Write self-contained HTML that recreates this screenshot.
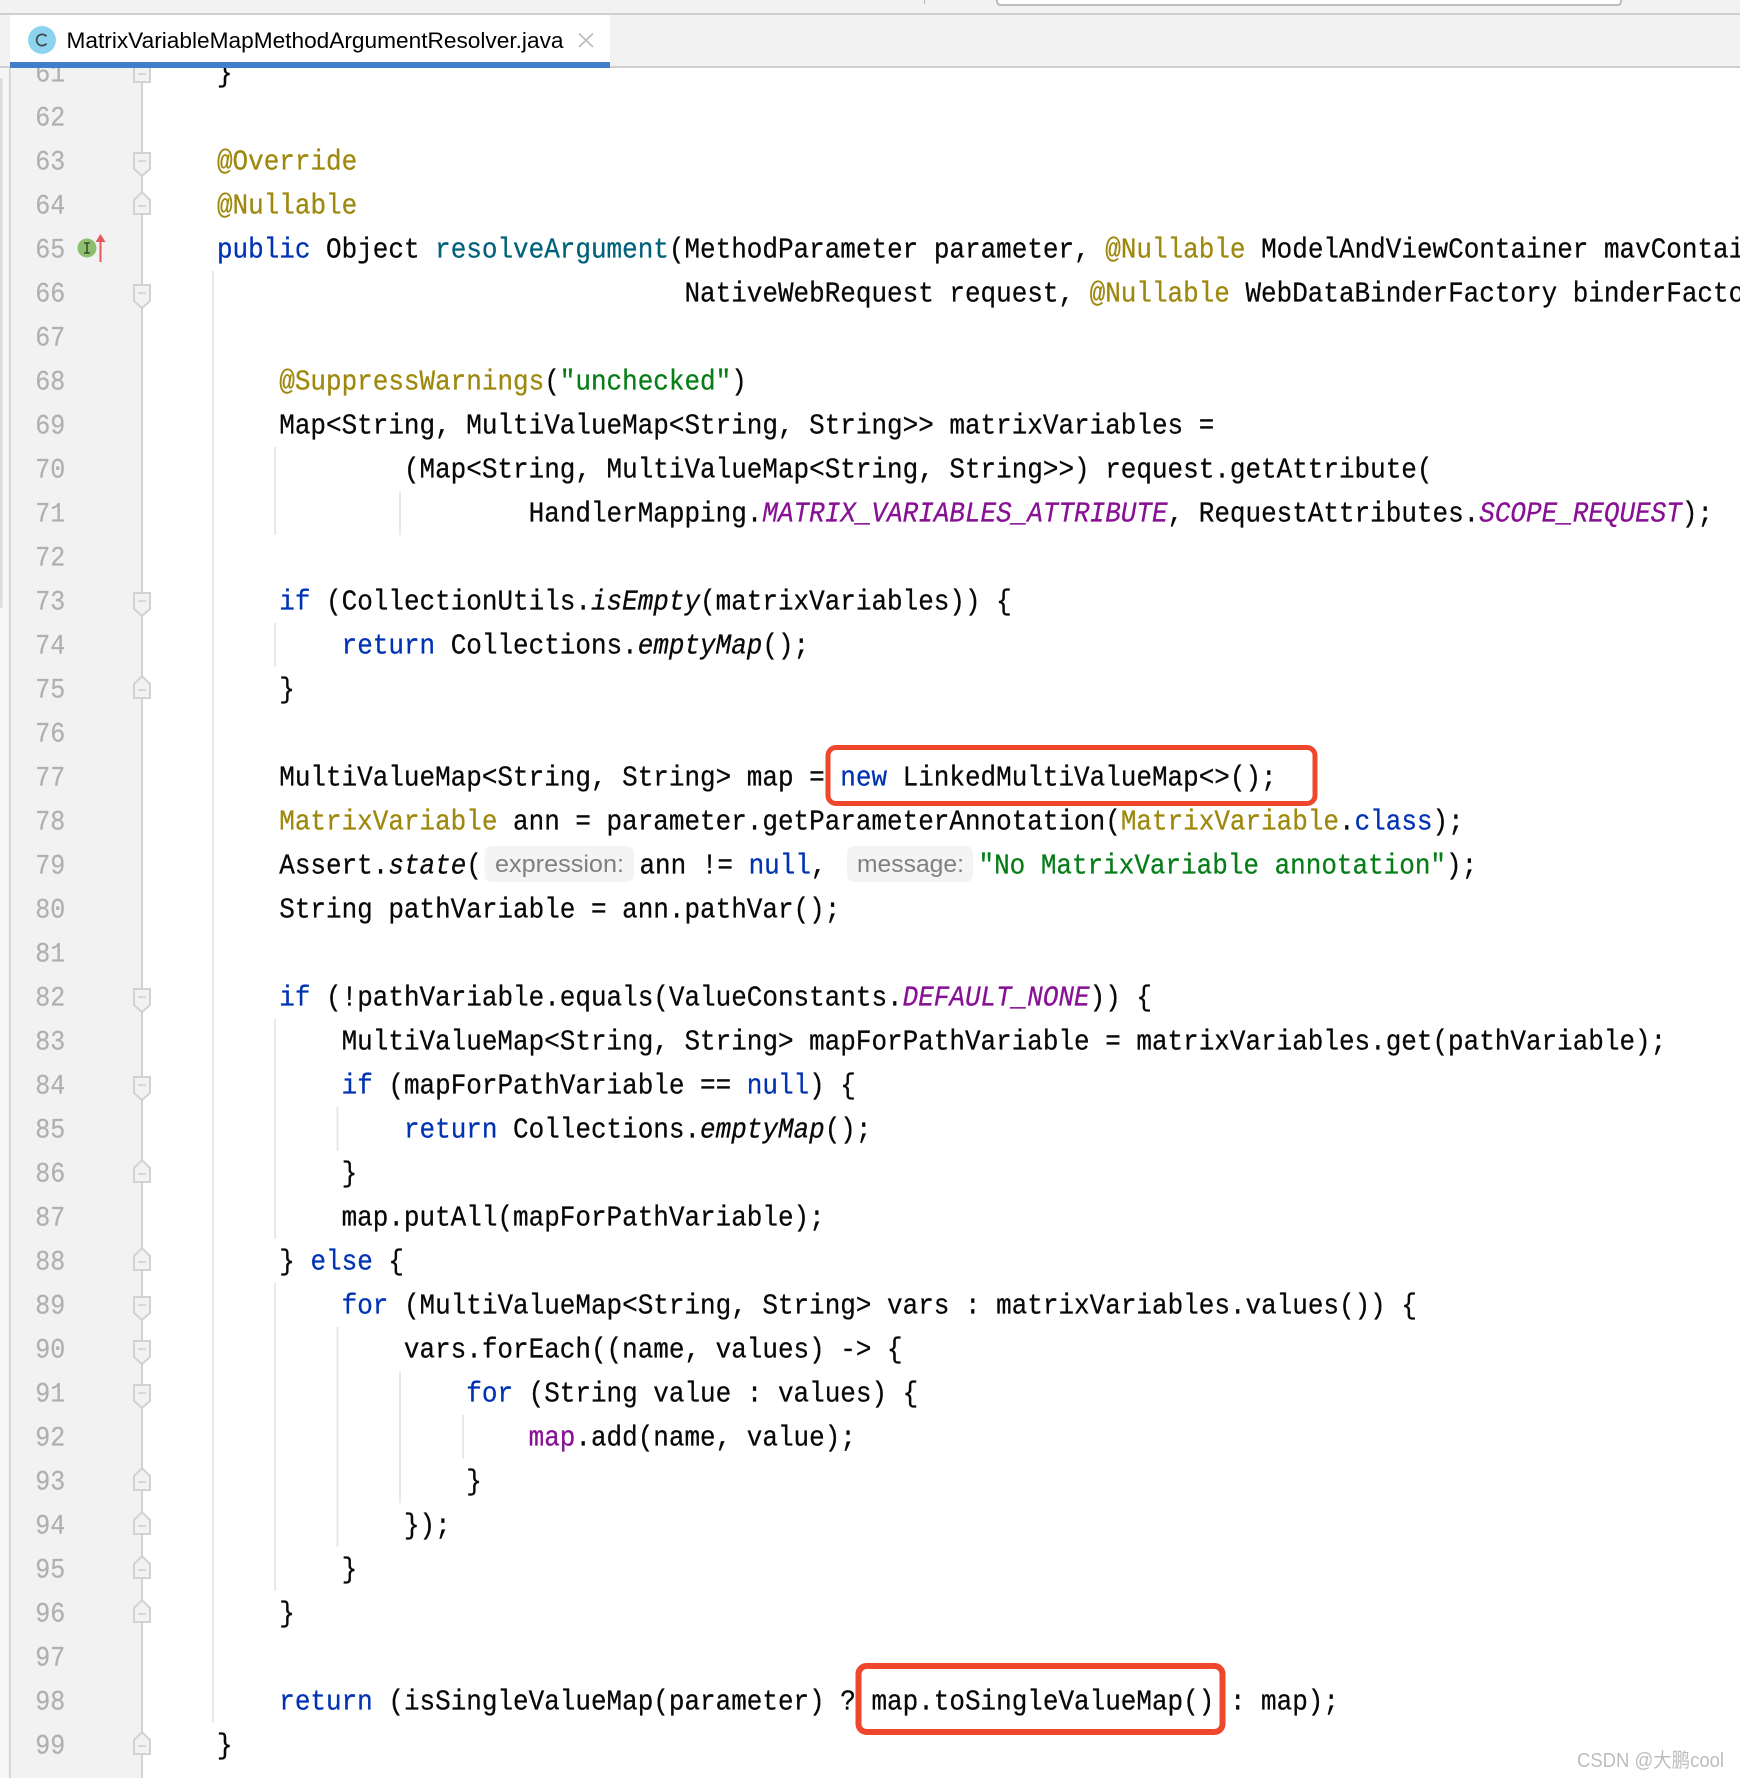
<!DOCTYPE html>
<html lang="en"><head><meta charset="utf-8"><title>MatrixVariableMapMethodArgumentResolver.java</title>
<style>
html,body{margin:0;padding:0;background:#fff}
body{position:relative;width:1740px;height:1778px;overflow:hidden}
svg{position:absolute;left:0;top:0}
pre{position:absolute;margin:0;font-family:"Liberation Mono",monospace;transform-origin:0 0;transform:scaleY(1.1);white-space:pre}
#code{left:154.6px;top:52px;font-size:25.98px;line-height:40px;color:#080808;width:1586px;overflow:hidden;-webkit-text-stroke:.25px currentColor}
#nums{left:35.2px;top:53px;font-size:25px;line-height:40px;color:#b0b0b0;-webkit-text-stroke:.2px currentColor}
.k{color:#0033b3}.a{color:#9e880d}.m{color:#00627a}.s{color:#067d17}.f{color:#871094;font-style:italic}.p{color:#871094}.i{font-style:italic}
.g{display:inline-block;height:1px}
</style></head><body>
<svg width="1740" height="1778" style="z-index:0">
<rect x="0" y="68" width="10" height="1710" fill="#f6f6f6"/>
<rect x="0" y="78" width="2.5" height="530" rx="1" fill="#dcdcdc"/>
<rect x="10" y="68" width="132" height="1710" fill="#f2f2f2"/>
<rect x="9" y="68" width="1.6" height="1710" fill="#cfcfcf"/>
<g fill="#e8e8e8">
<rect x="212" y="271" width="2" height="1452"/>
<rect x="274" y="447" width="2" height="88"/>
<rect x="274" y="623" width="2" height="44"/>
<rect x="274" y="1019" width="2" height="220"/>
<rect x="274" y="1283" width="2" height="308"/>
<rect x="336.5" y="1107" width="2" height="44"/>
<rect x="336.5" y="1327" width="2" height="220"/>
<rect x="399" y="491" width="2" height="44"/>
<rect x="399" y="1371" width="2" height="132"/>
<rect x="462" y="1415" width="2" height="44"/>
</g>
<rect x="484.5" y="846" width="149.5" height="36" rx="7" fill="#f4f4f4"/>
<rect x="847" y="846" width="126" height="36" rx="7" fill="#f4f4f4"/>
<text x="495" y="872" font-family="Liberation Sans,sans-serif" font-size="24" fill="#808080" textLength="129" lengthAdjust="spacingAndGlyphs">expression:</text>
<text x="857" y="872" font-family="Liberation Sans,sans-serif" font-size="24" fill="#808080" textLength="107" lengthAdjust="spacingAndGlyphs">message:</text>
</svg>
<pre id="nums">61
62
63
64
65
66
67
68
69
70
71
72
73
74
75
76
77
78
79
80
81
82
83
84
85
86
87
88
89
90
91
92
93
94
95
96
97
98
99</pre>
<pre id="code">    }

    <span class="a">@Override</span>
    <span class="a">@Nullable</span>
    <span class="k">public</span> Object <span class="m">resolveArgument</span>(MethodParameter parameter, <span class="a">@Nullable</span> ModelAndViewContainer mavContainer,
                                  NativeWebRequest request, <span class="a">@Nullable</span> WebDataBinderFactory binderFactory) throws Exception {

        <span class="a">@SuppressWarnings</span>(<span class="s">"unchecked"</span>)
        Map&lt;String, MultiValueMap&lt;String, String&gt;&gt; matrixVariables =
                (Map&lt;String, MultiValueMap&lt;String, String&gt;&gt;) request.getAttribute(
                        HandlerMapping.<span class="f">MATRIX_VARIABLES_ATTRIBUTE</span>, RequestAttributes.<span class="f">SCOPE_REQUEST</span>);

        <span class="k">if</span> (CollectionUtils.<span class="i">isEmpty</span>(matrixVariables)) {
            <span class="k">return</span> Collections.<span class="i">emptyMap</span>();
        }

        MultiValueMap&lt;String, String&gt; map = <span class="k">new</span> LinkedMultiValueMap&lt;&gt;();
        <span class="a">MatrixVariable</span> ann = parameter.getParameterAnnotation(<span class="a">MatrixVariable</span>.<span class="k">class</span>);
        Assert.<span class="i">state</span>(<span class="g" style="width:157.6px"></span>ann != <span class="k">null</span>,<span class="g" style="width:152px"></span><span class="s">"No MatrixVariable annotation"</span>);
        String pathVariable = ann.pathVar();

        <span class="k">if</span> (!pathVariable.equals(ValueConstants.<span class="f">DEFAULT_NONE</span>)) {
            MultiValueMap&lt;String, String&gt; mapForPathVariable = matrixVariables.get(pathVariable);
            <span class="k">if</span> (mapForPathVariable == <span class="k">null</span>) {
                <span class="k">return</span> Collections.<span class="i">emptyMap</span>();
            }
            map.putAll(mapForPathVariable);
        } <span class="k">else</span> {
            <span class="k">for</span> (MultiValueMap&lt;String, String&gt; vars : matrixVariables.values()) {
                vars.forEach((name, values) -&gt; {
                    <span class="k">for</span> (String value : values) {
                        <span class="p">map</span>.add(name, value);
                    }
                });
            }
        }

        <span class="k">return</span> (isSingleValueMap(parameter) ? map.toSingleValueMap() : map);
    }</pre>
<svg width="1740" height="1778" style="z-index:3">
<defs>
<g id="d"><path d="M-8-8H8V8L0 15-8 8Z" fill="#f2f2f2" stroke="#d2d2d2" stroke-width="2"/><path d="M-4 0H4" stroke="#d2d2d2" stroke-width="1.6"/></g>
<g id="u"><path d="M-8 9H8V-5L0-13-8-5Z" fill="#f2f2f2" stroke="#d2d2d2" stroke-width="2"/><path d="M-4 1H4" stroke="#d2d2d2" stroke-width="1.6"/></g>
</defs>
<rect x="141" y="68" width="2" height="1710" fill="#d2d2d2"/>
<use href="#u" x="142" y="73"/>
<use href="#d" x="142" y="161"/>
<use href="#u" x="142" y="205"/>
<use href="#d" x="142" y="293"/>
<use href="#d" x="142" y="601"/>
<use href="#u" x="142" y="689"/>
<use href="#d" x="142" y="997"/>
<use href="#d" x="142" y="1085"/>
<use href="#u" x="142" y="1173"/>
<use href="#u" x="142" y="1261"/>
<use href="#d" x="142" y="1305"/>
<use href="#d" x="142" y="1349"/>
<use href="#d" x="142" y="1393"/>
<use href="#u" x="142" y="1481"/>
<use href="#u" x="142" y="1525"/>
<use href="#u" x="142" y="1569"/>
<use href="#u" x="142" y="1613"/>
<use href="#u" x="142" y="1745"/>
<circle cx="87" cy="248" r="9.5" fill="#8cc06e"/>
<path d="M84 243H90M87 243V253M84 253H90" stroke="#3f4a35" stroke-width="1.6" fill="none"/>
<path d="M100.5 262V240" stroke="#e05a5f" stroke-width="2"/><path d="M95.5 242L100.5 234 105.5 242Z" fill="#e05a5f"/>
<!-- top bar -->
<rect x="0" y="0" width="1740" height="68" fill="#f2f2f2"/>
<rect x="0" y="13" width="1740" height="2" fill="#cfcfcf"/>
<rect x="0" y="66" width="1740" height="2" fill="#cfcfcf"/>
<rect x="924" y="0" width="1" height="4" fill="#b8b8b8"/>
<path d="M997-2V1Q997 5 1001 5H1617Q1621 5 1621 1V-2Z" fill="#fff" stroke="#bdbdbd" stroke-width="2"/>
<rect x="10" y="15" width="600" height="47" fill="#fff"/>
<rect x="10" y="62" width="600" height="6" fill="#3f7fc9"/>
<ellipse cx="42" cy="40" rx="14" ry="14" fill="#8dd3ee"/>
<path d="M46.5 36.4A5.6 5.6 0 1 0 46.5 43.6" fill="none" stroke="#3c4a50" stroke-width="1.7"/>
<text x="66.5" y="48" font-family="Liberation Sans,sans-serif" font-size="22" fill="#000" textLength="497" lengthAdjust="spacingAndGlyphs">MatrixVariableMapMethodArgumentResolver.java</text>
<path d="M579 33.5L593 47M593 33.5L579 47" stroke="#bfbfbf" stroke-width="1.8"/>
<!-- annotations -->
<rect x="828" y="747.5" width="487" height="56" rx="8" fill="none" stroke="#ee472b" stroke-width="5"/>
<rect x="858.5" y="1666" width="364" height="66" rx="8" fill="none" stroke="#ee472b" stroke-width="6"/>
<text x="1577" y="1767" font-family="Liberation Sans,Noto Sans CJK SC,sans-serif" font-size="20" fill="#bdbdbd" textLength="147" lengthAdjust="spacingAndGlyphs">CSDN @大鹏cool</text>
</svg>
</body></html>
